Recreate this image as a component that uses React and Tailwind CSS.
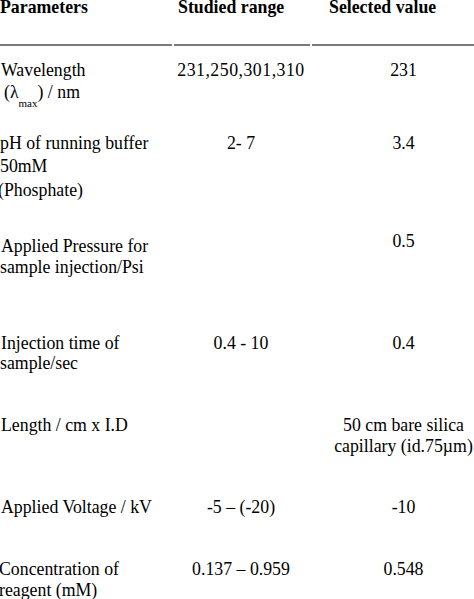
import React from "react";

function Row({ h, children }) {
  return (
    <div className={`grid grid-cols-[172px_136px_183px] gap-x-[2px] ${h}`}>
      {children}
    </div>
  );
}

export default function App() {
  return (
    <div className="w-[474px] h-[599px] overflow-hidden bg-white text-black font-['Liberation_Serif','Times_New_Roman',serif] text-[17.8px] leading-[21px]">
      <div className="w-[495px]">
        {/* header */}
        <div className="grid grid-cols-[172px_136px_183px] gap-x-[2px] h-[44px] font-bold leading-[15px]">
          <div>Parameters</div>
          <div className="pl-[4px]">Studied range</div>
          <div className="pl-[17px]">Selected value</div>
        </div>
        {/* rule */}
        <div className="grid grid-cols-[172px_136px_183px] gap-x-[2px] h-[2px]">
          <div className="bg-[#7a7a7a]" />
          <div className="bg-[#7a7a7a]" />
          <div className="bg-[#7a7a7a]" />
        </div>
        <div className="h-[14px]" />

        <Row h="h-[73px]">
          <div>
            <div className="pl-[1px]">Wavelength</div>
            <div className="mt-[1px] pl-[4px] whitespace-nowrap">
              (λ<span className="relative top-[9px] text-[11px] leading-none">max</span>) / nm
            </div>
          </div>
          <div className="text-center pr-[2px] tracking-[0.5px]">231,250,301,310</div>
          <div className="text-center">231</div>
        </Row>

        <Row h="h-[103px]">
          <div>
            <div>pH of running buffer</div>
            <div className="mt-[2px]">50mM</div>
            <div className="mt-[3px] -ml-[2px]">(Phosphate)</div>
          </div>
          <div className="text-center pr-[2px]">2- 7</div>
          <div className="text-center">3.4</div>
        </Row>

        <Row h="h-[97px]">
          <div>
            <div className="pl-[1px]">Applied Pressure for</div>
            <div>sample injection/Psi</div>
          </div>
          <div />
          <div className="text-center -mt-[5px]">0.5</div>
        </Row>

        <Row h="h-[82px]">
          <div>
            <div className="pl-[1px]">Injection time of</div>
            <div className="-mt-[1px]">sample/sec</div>
          </div>
          <div className="text-center pr-[2px]">0.4 - 10</div>
          <div className="text-center">0.4</div>
        </Row>

        <Row h="h-[82px]">
          <div>
            <div className="pl-[1px]">Length / cm x I.D</div>
          </div>
          <div />
          <div className="text-center whitespace-nowrap">
            <div>50 cm bare silica</div>
            <div>capillary (id.75µm)</div>
          </div>
        </Row>

        <Row h="h-[62px]">
          <div>
            <div className="pl-[1px]">Applied Voltage / kV</div>
          </div>
          <div className="text-center pr-[2px]">-5 – (-20)</div>
          <div className="text-center">-10</div>
        </Row>

        <Row h="h-[60px]">
          <div>
            <div className="-ml-[1px]">Concentration of</div>
            <div className="-ml-[1px]">reagent (mM)</div>
          </div>
          <div className="text-center pr-[2px]">0.137 – 0.959</div>
          <div className="text-center">0.548</div>
        </Row>
      </div>
    </div>
  );
}
